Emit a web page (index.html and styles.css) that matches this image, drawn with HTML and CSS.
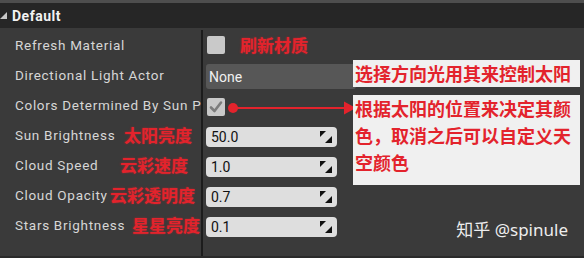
FILE: index.html
```html
<!DOCTYPE html>
<html lang="zh">
<head>
    <meta charset="UTF-8">
    <title>Default - Details</title>
    <link rel="stylesheet" href="styles.css">
</head>
<body>
    <div class="topline"></div>

    <!-- CATEGORY HEADER -->
    <div class="category">
        <span class="caret"></span>
        <span class="category-name">Default</span>
    </div>

    <!-- PROPERTIES -->
    <div class="panel">
        <div class="names">
            <div class="row">Refresh Material</div>
            <div class="row">Directional Light Actor</div>
            <div class="row">Colors Determined By Sun Position</div>
            <div class="row">Sun Brightness<span class="note note-sun">太阳亮度</span></div>
            <div class="row">Cloud Speed<span class="note note-speed">云彩速度</span></div>
            <div class="row">Cloud Opacity<span class="note note-opacity">云彩透明度</span></div>
            <div class="row">Stars Brightness<span class="note note-stars">星星亮度</span></div>
        </div>

        <div class="divider"></div>

        <div class="values">
            <div class="row">
                <span class="checkbox"></span>
                <span class="note note-refresh">刷新材质</span>
            </div>
            <div class="row">
                <div class="object-field">None</div>
            </div>
            <div class="row">
                <span class="checkbox">
                    <svg width="18" height="18" viewBox="0 0 18 18"><path d="M4 9.5 L7.5 13 L14 4.5" fill="none" stroke="#7c7c7c" stroke-width="2.6" stroke-linecap="round" stroke-linejoin="round"/></svg>
                </span>
                <svg class="pointer" width="132" height="16" viewBox="0 0 132 16">
                    <circle cx="5" cy="8" r="5" fill="#e3232c"/>
                    <line x1="5" y1="8" x2="120" y2="8" stroke="#e3232c" stroke-width="2"/>
                    <polygon points="116,1.5 128,8 116,14.5" fill="#e3232c"/>
                </svg>
            </div>
            <div class="row">
                <div class="number-field"><span>50.0</span><svg class="drag" width="12" height="12" viewBox="0 0 12 12"><polygon points="0,0 6,0 0,6" fill="#111"/><polygon points="12,12 5,12 12,5" fill="#111"/></svg></div>
            </div>
            <div class="row">
                <div class="number-field"><span>1.0</span><svg class="drag" width="12" height="12" viewBox="0 0 12 12"><polygon points="0,0 6,0 0,6" fill="#111"/><polygon points="12,12 5,12 12,5" fill="#111"/></svg></div>
            </div>
            <div class="row">
                <div class="number-field"><span>0.7</span><svg class="drag" width="12" height="12" viewBox="0 0 12 12"><polygon points="0,0 6,0 0,6" fill="#111"/><polygon points="12,12 5,12 12,5" fill="#111"/></svg></div>
            </div>
            <div class="row">
                <div class="number-field"><span>0.1</span><svg class="drag" width="12" height="12" viewBox="0 0 12 12"><polygon points="0,0 6,0 0,6" fill="#111"/><polygon points="12,12 5,12 12,5" fill="#111"/></svg></div>
            </div>
        </div>

        <!-- ANNOTATIONS -->
        <div class="callout callout-light">选择方向光用其来控制太阳</div>
        <div class="callout callout-sun">根据太阳的位置来决定其颜<br>色，取消之后可以自定义天<br>空颜色</div>
        <div class="watermark">知乎 @spinule</div>
    </div>
</body>
</html>
```

FILE: styles.css
```css
body {
    margin: 0;
    background: #3a3a3a;
    font-family: Roboto, "Noto Sans", sans-serif;
    width: 584px;
    height: 258px;
    overflow: hidden;
}

.topline {
    height: 3px;
    background: #4e4e4e;
}

.category {
    height: 25px;
    background: #262626;
    display: flex;
    align-items: center;
}

.caret {
    width: 0;
    height: 0;
    border-left: 7px solid transparent;
    border-bottom: 7px solid #c8c8c8;
    margin-right: 5px;
}

.category-name {
    color: #f2f2f2;
    font-weight: bold;
    font-size: 14px;
    letter-spacing: 0.5px;
}

.panel {
    position: relative;
    display: flex;
    height: 230px;
    padding-top: 2px;
    box-sizing: border-box;
    border-bottom: 2px solid #2a2a2a;
}

.names {
    width: 201px;
    overflow: hidden;
}

.row {
    position: relative;
    height: 30px;
    display: flex;
    align-items: center;
    white-space: nowrap;
}

.names .row {
    padding-left: 15px;
    color: #d6d6d6;
    font-size: 13.5px;
    letter-spacing: 0.7px;
}

.divider {
    width: 2px;
    background: #1c1c1c;
}

.values {
    flex: 1;
    padding-left: 3px;
}

.note {
    position: absolute;
    top: 0;
    line-height: 30px;
    color: #e3232c;
    font-family: "Noto Sans CJK SC", sans-serif;
    font-weight: bold;
    font-size: 17px;
    letter-spacing: 0;
    text-shadow: 0 0 2px rgba(227, 35, 44, 0.6);
}

.note-sun { left: 124px; }
.note-speed { left: 120px; }
.note-opacity { left: 110px; }
.note-stars { left: 132px; }
.note-refresh { left: 34px; }

.checkbox {
    width: 18px;
    height: 18px;
    margin-left: 1px;
    background: #c9c9c9;
    border-radius: 2px;
    display: flex;
}

.values .row:nth-child(3) .checkbox {
    margin-top: 3px;
}

.pointer {
    position: absolute;
    left: 22px;
    top: 10px;
}

.object-field {
    width: 150px;
    height: 25px;
    background: #575757;
    border-radius: 3px;
    color: #f0f0f0;
    font-size: 14px;
    display: flex;
    align-items: center;
    padding-left: 3px;
    box-sizing: border-box;
    margin-top: 3px;
}

.number-field {
    width: 131px;
    height: 20px;
    background: #dedede;
    border-radius: 4px;
    display: flex;
    align-items: center;
    justify-content: space-between;
    padding: 0 5px;
    box-sizing: border-box;
    color: #111;
    font-size: 14px;
    margin-top: 3px;
}

.callout {
    position: absolute;
    left: 353px;
    width: 227px;
    background: #f0f0f0;
    color: #e3232c;
    font-family: "Noto Sans CJK SC", sans-serif;
    font-weight: bold;
    font-size: 18px;
    line-height: 27px;
    padding-left: 2px;
    box-sizing: border-box;
    white-space: nowrap;
}

.callout-light {
    top: 32px;
    height: 27px;
}

.callout-sun {
    top: 67px;
    height: 90px;
}

.watermark {
    position: absolute;
    right: 16px;
    top: 188px;
    color: #ededed;
    font-family: "Noto Sans", "Noto Sans CJK SC", sans-serif;
    font-size: 17px;
}
```
